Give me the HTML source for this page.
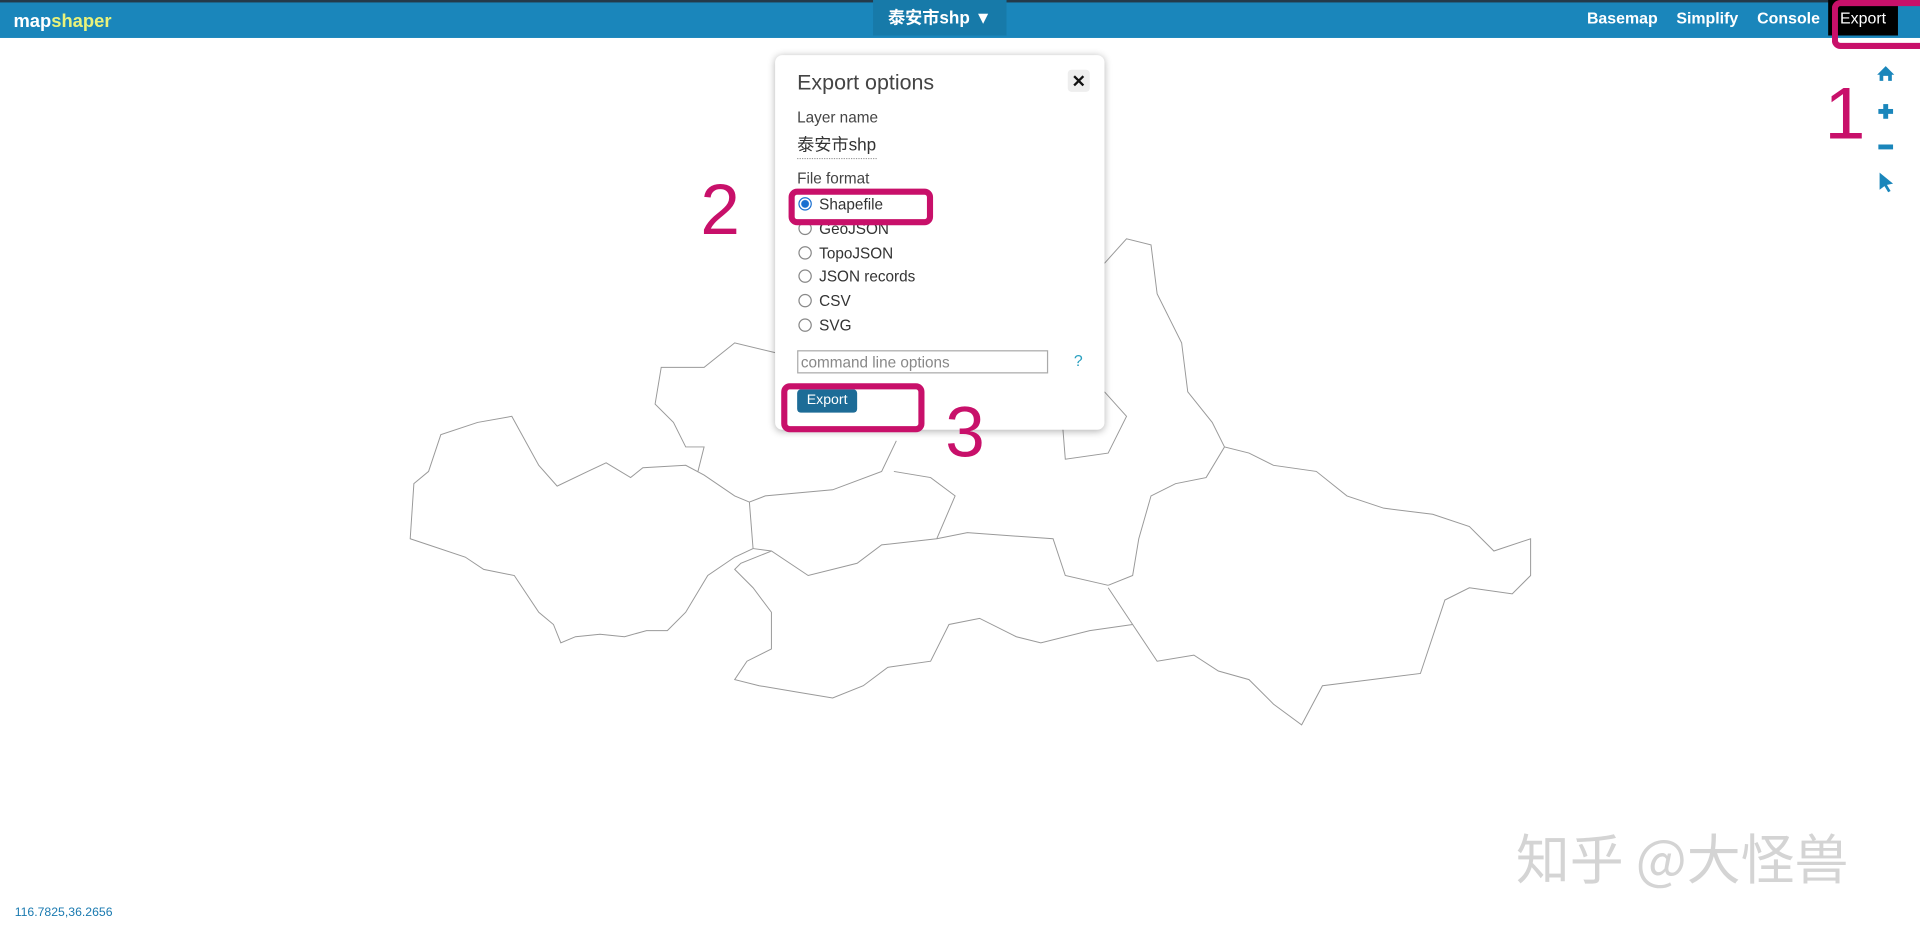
<!DOCTYPE html>
<html><head><meta charset="utf-8"><style>
html,body{margin:0;padding:0;width:1920px;height:928px;overflow:hidden;background:#fff}
#w{position:absolute;left:0;top:0;width:1568px;height:758px;transform:scale(1.22449);transform-origin:0 0;font-family:"Liberation Sans","Noto Sans CJK SC",sans-serif}
.hdr{position:absolute;left:0;top:0;width:1568px;height:31px;background:#1a86bb;border-top:2px solid #243a4a;box-sizing:border-box}
.hdr .logo{position:absolute;left:11px;top:7px;font-size:15px;font-weight:bold;color:#fff}
.hdr .logo span{color:#e9f27a}
.lyr{position:absolute;left:713px;top:0;width:109px;height:29px;background:#177aa9;color:#fff;font-weight:bold;font-size:14px;text-align:center;line-height:29px}
.nav{position:absolute;top:0;height:29px;line-height:29px;color:#fff;font-weight:bold;font-size:13px}
.exp{position:absolute;left:1493px;top:0;width:57px;height:29px;background:#000;color:#fff;font-size:13px;line-height:29px;text-align:center}
.dlg{position:absolute;left:633px;top:45px;width:269px;height:306px;background:#fff;border-radius:6px;box-shadow:0 1px 6px rgba(0,0,0,.3);color:#444}
.dlg .t{position:absolute;left:18px;top:12px;font-size:17.5px;color:#444}
.x{position:absolute;left:239px;top:12px;width:18px;height:18px;background:#eee;border-radius:3px;font-size:14px;font-weight:bold;text-align:center;line-height:18px;color:#111}
.lb{position:absolute;left:18px;font-size:12.5px;color:#444}
.r{position:absolute;left:19px;font-size:12.5px;color:#333}
.r i{display:inline-block;width:9px;height:9px;border:1px solid #888;border-radius:50%;vertical-align:-1px;margin-right:6px}
.inp{position:absolute;left:18px;top:241px;width:205px;height:19px;border:1px solid #aaa;font-size:12.5px;color:#888;line-height:18px;padding-left:2px;box-sizing:border-box}
.btn{position:absolute;left:18px;top:273px;width:49px;height:19px;background:#1d6c97;color:#fff;font-size:11.5px;text-align:center;line-height:19px;border-radius:3px}
.ann{position:absolute;color:#c8106a;font-size:46px;font-family:"Liberation Sans",sans-serif}
.box{position:absolute;border:5px solid #c8106a;border-radius:7px;box-sizing:border-box}
</style></head><body><div id="w">
<svg style="position:absolute;left:0;top:0" width="1568" height="758" fill="none" stroke="#999" stroke-width="0.8">
<path d="M418,340 L440,380 L455,397 L480,385 L495,378 L515,390 L525,382 L560,380 L575,388 L600,405 L612,410 L615,448 L600,455 L578,470 L560,500 L545,515 L528,515 L510,520 L490,518 L470,520 L458,525 L452,510 L440,500 L420,470 L395,465 L380,455 L350,445 L335,440 L338,395 L350,385 L360,355 L390,345 Z"/>
<path d="M633,288 L600,280 L575,300 L540,300 L535,330 L550,345 L560,365 L575,365 L570,385"/>
<path d="M612,410 L625,405 L680,400 L720,385 L732,360"/>
<path d="M730,385 L760,390 L780,405 L765,440"/>
<path d="M615,448 L630,450 L660,470 L700,460 L720,445 L765,440 L790,435 L860,440 L870,470 L905,478"/>
<path d="M905,478 L925,470 L930,440 L940,405 L960,395 L985,390 L1000,365 L1020,370 L1040,380 L1075,385 L1100,405 L1130,415 L1170,420 L1200,430 L1220,450 L1250,440 L1250,470 L1235,485 L1200,480 L1180,490 L1170,520 L1160,550 L1120,555 L1080,560 L1063,592 L1040,575 L1020,555 L995,548 L975,535 L945,540 L925,510 L905,480"/>
<path d="M902,215 L920,195 L940,200 L945,240 L965,280 L970,320 L990,345 L1000,365"/>
<path d="M902,320 L920,340 L905,370 L870,375 L868,350"/>
<path d="M630,450 L605,460 L600,465 L615,480 L630,500 L630,530 L610,540 L600,555 L620,560 L650,565 L680,570 L705,560 L725,545 L760,540 L775,510 L800,505 L830,520 L850,525 L890,515 L925,510"/>
</svg>
<div class="hdr"><div class="logo">map<span>shaper</span></div></div>
<div class="lyr">泰安市shp ▼</div>
<div class="nav" style="left:1296px">Basemap</div>
<div class="nav" style="left:1369px">Simplify</div>
<div class="nav" style="left:1435px">Console</div>
<div class="exp">Export</div>
<svg style="position:absolute;left:1532px;top:52px" width="18" height="110" fill="#1a86bb">
<path d="M8,2 L15,9 L13,9 L13,14 L10,14 L10,10 L6,10 L6,14 L3,14 L3,9 L1,9 Z"/>
<rect x="2" y="37" width="12" height="4"/><rect x="6" y="33" width="4" height="12"/>
<rect x="2" y="66" width="12" height="4"/>
<path d="M3,89 L14,98 L9,99 L12,104 L10,105 L7,100 L3,103 Z"/>
</svg>
<div class="dlg">
<div class="t">Export options</div><div class="x">✕</div>
<div class="lb" style="top:44px">Layer name</div>
<div class="lb" style="top:63px;font-size:14px;color:#333;border-bottom:1px dotted #999;padding-bottom:1px">泰安市shp</div>
<div class="lb" style="top:94px">File format</div>
<div class="r" style="top:115px"><i style="border-color:#1a6fd0;background:radial-gradient(circle,#1a6fd0 45%,#fff 55%)"></i>Shapefile</div>
<div class="r" style="top:135px"><i></i>GeoJSON</div>
<div class="r" style="top:155px"><i></i>TopoJSON</div>
<div class="r" style="top:174px"><i></i>JSON records</div>
<div class="r" style="top:194px"><i></i>CSV</div>
<div class="r" style="top:214px"><i></i>SVG</div>
<div class="inp">command line options</div>
<div style="position:absolute;left:244px;top:242px;color:#2aa0c0;font-size:13px">?</div>
<div class="btn">Export</div>
</div>
<div class="box" style="left:1496px;top:0;width:80px;height:40px;border-right:none"></div>
<div class="ann" style="left:1490px;top:58px;font-size:60px">1</div>
<div class="box" style="left:644px;top:154px;width:118px;height:30px"></div>
<div class="ann" style="left:572px;top:138px;font-size:58px">2</div>
<div class="box" style="left:638px;top:313px;width:117px;height:40px"></div>
<div class="ann" style="left:772px;top:320px;font-size:58px">3</div>
<div style="position:absolute;left:1238px;top:667px;font-size:44px;color:#d4d4d4;font-family:'Noto Sans CJK SC',sans-serif">知乎 @大怪兽</div>
<div style="position:absolute;left:12px;top:740px;font-size:10px;color:#1a7ab0">116.7825,36.2656</div>
</div></body></html>
